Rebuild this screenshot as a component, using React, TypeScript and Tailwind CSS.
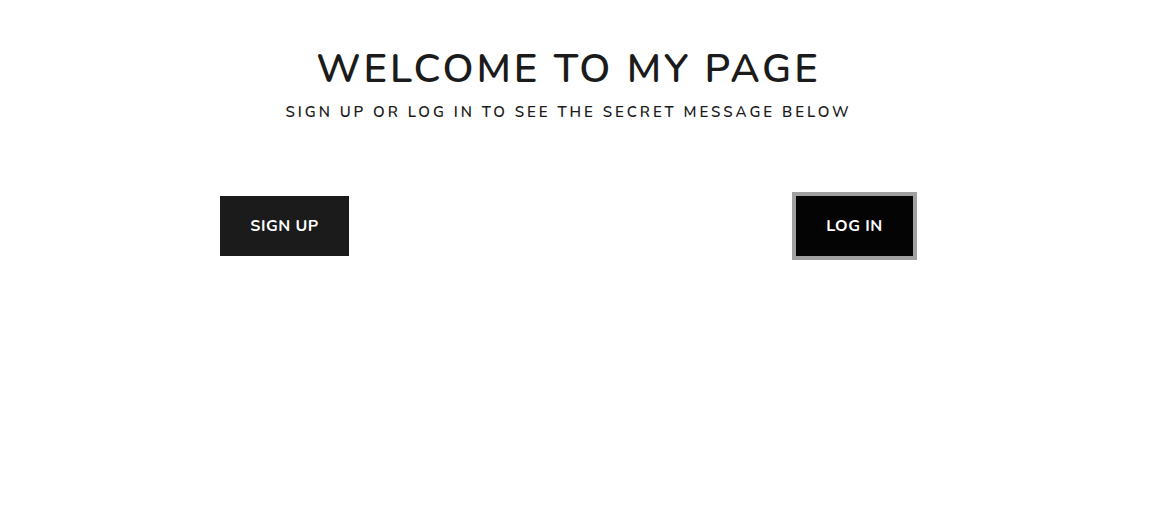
export default function App() {
  return (
    <div className="min-h-[527px] bg-white font-['Nunito','Noto_Sans',sans-serif] text-[#1b1b1b]">
      <div className="ml-[220px] flex w-[697px] flex-col pt-[45px]">
        <h1 className="text-center text-[40px] font-semibold leading-[48px] tracking-[2.9px]">WELCOME TO MY PAGE</h1>
        <p className="mt-[7px] text-center text-[15px] font-semibold leading-[24px] tracking-[2.95px]">
          SIGN UP OR LOG IN TO SEE THE SECRET MESSAGE BELOW
        </p>
        <div className="mt-[72px] flex items-start justify-between pr-[4px]">
          <button className="h-[60px] w-[129px] bg-[#1b1b1b] text-[16px] font-bold tracking-[0.5px] text-white">
            SIGN UP
          </button>
          <button className="h-[60px] w-[117px] bg-[#040404] text-[16px] font-bold tracking-[0.5px] text-white outline-4 outline-[#a0a0a0]">
            LOG IN
          </button>
        </div>
      </div>
    </div>
  );
}
